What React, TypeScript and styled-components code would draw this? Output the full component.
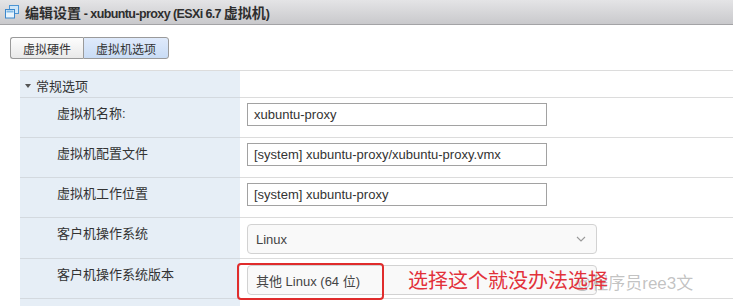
import React from "react";
import styled, { createGlobalStyle } from "styled-components";

const Global = createGlobalStyle`
  html, body { margin: 0; padding: 0; background: #fff; }
  body { font-family: "Liberation Sans", "Noto Sans CJK SC", Arial, sans-serif; color: #333; overflow: hidden; }
  * { box-sizing: border-box; }
`;

const Page = styled.div`
  width: 733px;
  height: 306px;
  overflow: hidden;
  background: #fff;
`;

const TitleBar = styled.div`
  height: 25px;
  display: flex;
  align-items: center;
  gap: 5px;
  padding-left: 4px;
  background: linear-gradient(#e4e4e6, #c9c9cc);
  border-bottom: 1px solid #a3a3a6;
`;

const TitleText = styled.span`
  font-size: 14px;
  font-weight: bold;
  color: #2e2e2e;
  white-space: nowrap;
`;

const Latin = styled.span`
  font-size: 12.5px;
  letter-spacing: -0.6px;
`;

const TabBar = styled.div`
  padding: 12px 10px 11px;
  display: flex;
`;

const Tab = styled.div<{ $active?: boolean }>`
  height: 22px;
  padding: 0 12px;
  display: flex;
  align-items: center;
  font-size: 12px;
  color: #333;
  border: 1px solid #9a9a9a;
  background: ${(p) =>
    p.$active ? "linear-gradient(#dfeafb, #c9dcf5)" : "linear-gradient(#fdfdfd, #e9e9e9)"};
  &:first-child { border-radius: 3px 0 0 3px; border-right: none; }
  &:last-child { border-radius: 0 3px 3px 0; }
`;

const Table = styled.div`
  margin-left: 20px;
  border-top: 1px solid #dcdcdc;
  display: grid;
  grid-template-columns: 220px 1fr;
`;

const LeftCell = styled.div<{ $h: number }>`
  height: ${(p) => p.$h}px;
  background: #e6eef6;
  border-bottom: 1px solid #d3d9df;
`;

const RightCell = styled.div<{ $h: number }>`
  height: ${(p) => p.$h}px;
  border-bottom: 1px solid #dcdcdc;
  padding: 5px 0 0 7px;
  position: relative;
`;

const GroupHead = styled.div`
  display: flex;
  align-items: center;
  gap: 5px;
  padding: 5px 0 0 5px;
  font-size: 13px;
  color: #333;
`;

const Caret = styled.span`
  width: 0;
  height: 0;
  border-left: 3px solid transparent;
  border-right: 3px solid transparent;
  border-top: 4px solid #555;
`;

const Label = styled.div`
  padding: 8px 0 0 37px;
  font-size: 13px;
  line-height: 16px;
  color: #333;
`;

const TextInput = styled.div`
  width: 300px;
  height: 23px;
  border: 1px solid #a2a2a2;
  display: flex;
  align-items: center;
  padding-left: 6px;
  font-size: 13px;
  color: #333;
  background: #fff;
`;

const Select = styled.div<{ $mt?: number }>`
  width: 350px;
  height: 30px;
  margin-top: ${(p) => p.$mt ?? 0}px;
  border: 1px solid #d2d2d2;
  border-radius: 4px;
  background: #f9f9f9;
  display: flex;
  align-items: center;
  justify-content: space-between;
  padding: 0 10px 0 8px;
  font-size: 13px;
  color: #444;
`;

const RedBox = styled.div`
  position: absolute;
  left: -3px;
  top: 4px;
  width: 147px;
  height: 37px;
  border: 2px solid #e02c2c;
  border-radius: 4px;
`;

const Note = styled.div`
  position: absolute;
  left: 168px;
  top: 6px;
  font-size: 20px;
  color: #e2313a;
  white-space: nowrap;
`;

const Watermark = styled.div`
  position: absolute;
  left: 334px;
  top: 10px;
  font-size: 17px;
  color: rgba(120, 120, 120, 0.45);
  white-space: nowrap;
`;

const Chevron = () => (
  <svg width="10" height="6" viewBox="0 0 10 6">
    <path d="M1 1l4 4 4-4" fill="none" stroke="#999" strokeWidth="1.1" />
  </svg>
);

const VmIcon = () => (
  <svg width="16" height="16" viewBox="0 0 16 16">
    <rect x="5.5" y="1.5" width="9" height="8" fill="#cfe6f8" stroke="#4d95d3" />
    <rect x="1.5" y="5.5" width="9" height="8.5" fill="#e8f4fd" stroke="#3b87cc" />
    <rect x="2.5" y="6.5" width="7" height="2" fill="#7fb8e6" />
  </svg>
);

const rows = [
  { label: "虚拟机名称:", value: "xubuntu-proxy" },
  { label: "虚拟机配置文件", value: "[system] xubuntu-proxy/xubuntu-proxy.vmx" },
  { label: "虚拟机工作位置", value: "[system] xubuntu-proxy" },
];

export default function App() {
  return (
    <Page>
      <Global />
      <TitleBar>
        <VmIcon />
        <TitleText>
          编辑设置<Latin> - xubuntu-proxy (ESXi 6.7 </Latin>虚拟机<Latin>)</Latin>
        </TitleText>
      </TitleBar>
      <TabBar>
        <Tab>虚拟硬件</Tab>
        <Tab $active>虚拟机选项</Tab>
      </TabBar>
      <Table>
        <LeftCell $h={27}>
          <GroupHead>
            <Caret />
            常规选项
          </GroupHead>
        </LeftCell>
        <RightCell $h={27} />
        {rows.map((r) => (
          <React.Fragment key={r.label}>
            <LeftCell $h={40}>
              <Label>{r.label}</Label>
            </LeftCell>
            <RightCell $h={40}>
              <TextInput>{r.value}</TextInput>
            </RightCell>
          </React.Fragment>
        ))}
        <LeftCell $h={41}>
          <Label>客户机操作系统</Label>
        </LeftCell>
        <RightCell $h={41}>
          <Select $mt={1}>
            Linux
            <Chevron />
          </Select>
        </RightCell>
        <LeftCell $h={40}>
          <Label>客户机操作系统版本</Label>
        </LeftCell>
        <RightCell $h={40}>
          <Select $mt={1}>其他 Linux (64 位)</Select>
          <RedBox />
          <Watermark>@程序员ree3文</Watermark>
          <Note>选择这个就没办法选择</Note>
        </RightCell>
        <LeftCell $h={20} />
        <RightCell $h={20} />
      </Table>
    </Page>
  );
}
